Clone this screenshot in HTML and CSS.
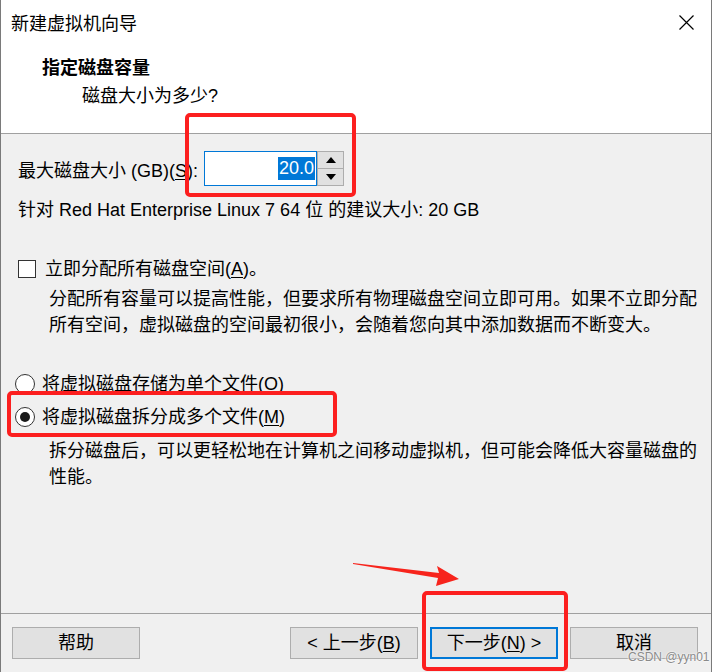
FILE: index.html
```html
<!DOCTYPE html>
<html lang="zh-CN">
<head>
    <meta charset="UTF-8">
    <title>新建虚拟机向导</title>
    <link rel="stylesheet" href="styles.css">
</head>
<body>
    <div class="dialog">
        <div class="titlebar">
            <span class="title">新建虚拟机向导</span>
            <svg class="close" width="15" height="15" viewBox="0 0 15 15">
                <path d="M0.5 0.5 L14.5 14.5 M14.5 0.5 L0.5 14.5" stroke="#000" stroke-width="1.2" fill="none"/>
            </svg>
        </div>
        <div class="header">
            <h1>指定磁盘容量</h1>
            <p>磁盘大小为多少?</p>
        </div>

        <div class="body">
            <div class="size-row">
                <span>最大磁盘大小 (GB)(<u>S</u>):</span>
                <div class="spin">
                    <div class="field"><span class="sel">20.0</span></div>
                    <div class="arrows">
                        <div class="arrow"><svg width="10" height="6" viewBox="0 0 10 6"><path d="M5 0 L10 6 L0 6 Z"/></svg></div>
                        <div class="arrow"><svg width="10" height="6" viewBox="0 0 10 6"><path d="M0 0 L10 0 L5 6 Z"/></svg></div>
                    </div>
                </div>
            </div>
            <p class="hint">针对 Red Hat Enterprise Linux 7 64 位 的建议大小: 20 GB</p>

            <div class="check-row"><span class="box"></span>立即分配所有磁盘空间(<u>A</u>)。</div>
            <p class="desc">分配所有容量可以提高性能，但要求所有物理磁盘空间立即可用。如果不立即分配所有空间，虚拟磁盘的空间最初很小，会随着您向其中添加数据而不断变大。</p>

            <div class="radio-row"><span class="radio"></span>将虚拟磁盘存储为单个文件(<u>O</u>)</div>
            <div class="radio-row"><span class="radio checked"></span>将虚拟磁盘拆分成多个文件(<u>M</u>)</div>
            <p class="desc">拆分磁盘后，可以更轻松地在计算机之间移动虚拟机，但可能会降低大容量磁盘的性能。</p>
        </div>

        <div class="footer">
            <div class="btn">帮助</div>
            <div class="spacer"></div>
            <div class="btn">&lt; 上一步(<u>B</u>)</div>
            <div class="btn default">下一步(<u>N</u>) &gt;</div>
            <div class="btn">取消</div>
        </div>

        <!-- annotations drawn over the screenshot -->
        <div class="mark mark-size"></div>
        <div class="mark mark-split"></div>
        <div class="mark mark-next"></div>
        <svg class="pointer" width="120" height="40" viewBox="0 0 120 40">
            <path d="M0 3 L86 13 L84 6 L106 19 L83 26 L85 18 L0 4 Z" fill="#f7241c"/>
        </svg>
        <span class="watermark">CSDN @yyn01</span>
    </div>
</body>
</html>
```

FILE: styles.css
```css
html, body {
    margin: 0;
    padding: 0;
}
body {
    font-family: "Liberation Sans", "Noto Sans CJK SC", sans-serif;
    font-size: 18px;
    color: #000;
    background: #f0f0f0;
}
.dialog {
    position: relative;
    width: 712px;
    height: 672px;
    box-sizing: border-box;
    border-left: 1px solid #7a7a7a;
    border-right: 1px solid #7a7a7a;
    background: #f0f0f0;
    display: flex;
    flex-direction: column;
    overflow: hidden;
}
u {
    text-underline-offset: 2px;
}

/* title + header */
.titlebar {
    height: 44px;
    background: #fff;
    display: flex;
    align-items: center;
    justify-content: space-between;
    padding: 0 17px 0 10px;
}
.header {
    height: 90px;
    box-sizing: border-box;
    background: #fff;
    border-bottom: 1px solid #a0a0a0;
    padding: 11px 0 0 41px;
}
.header h1 {
    margin: 0;
    font-size: 18px;
    font-weight: bold;
    line-height: 26px;
}
.header p {
    margin: 2px 0 0 40px;
    line-height: 26px;
}

/* body */
.body {
    flex: 1;
    padding: 17px 0 0 17px;
}
.size-row {
    display: flex;
    align-items: center;
    height: 35px;
    gap: 6px;
}
.spin {
    display: flex;
    height: 35px;
}
.field {
    width: 110px;
    border: 1px solid #0078d7;
    background: #fff;
    display: flex;
    align-items: center;
    justify-content: flex-end;
    padding-right: 1px;
}
.sel {
    background: #0078d7;
    color: #fff;
    line-height: 23px;
    padding: 0 1px;
}
.arrows {
    width: 26px;
    display: flex;
    flex-direction: column;
    border: 1px solid #adadad;
    border-left: none;
}
.arrow {
    flex: 1;
    background: #e1e1e1;
    border-left: 1px solid #adadad;
    display: flex;
    align-items: center;
    justify-content: center;
}
.arrow + .arrow {
    border-top: 1px solid #adadad;
}
.hint {
    margin: 11px 0 0;
    line-height: 26px;
}
.check-row, .radio-row {
    display: flex;
    align-items: center;
    line-height: 26px;
}
.check-row {
    margin-top: 33px;
}
.box {
    width: 16px;
    height: 16px;
    border: 1px solid #333;
    background: #fff;
    margin-right: 9px;
}
.desc {
    margin: 4px 14px 0 31px;
    line-height: 26px;
}
.radio-row {
    height: 33px;
    margin-left: -3px;
}
.desc + .radio-row {
    margin-top: 29px;
}
.radio {
    width: 18px;
    height: 18px;
    border: 1px solid #333;
    border-radius: 50%;
    background: #fff;
    margin-right: 7px;
    display: flex;
    align-items: center;
    justify-content: center;
}
.radio.checked::after {
    content: "";
    width: 10px;
    height: 10px;
    border-radius: 50%;
    background: #1a1a1a;
}
.radio-row + .desc {
    margin-top: 5px;
}

/* footer */
.footer {
    height: 59px;
    box-sizing: border-box;
    border-top: 1px solid #a0a0a0;
    display: flex;
    align-items: flex-start;
    gap: 12px;
    padding: 13px 13px 0 11px;
}
.spacer {
    flex: 1;
}
.btn {
    width: 126px;
    height: 30px;
    line-height: 30px;
    text-align: center;
    border: 1px solid #adadad;
    background: #e1e1e1;
}
.btn.default {
    width: 124px;
    height: 28px;
    line-height: 28px;
    border: 2px solid #0078d7;
}

/* annotations */
.mark {
    position: absolute;
    border: 4px solid #fc1f1f;
    border-radius: 5px;
}
.mark-size {
    left: 184px;
    top: 113px;
    width: 163px;
    height: 76px;
}
.mark-split {
    left: 6px;
    top: 391px;
    width: 322px;
    height: 38px;
}
.mark-next {
    left: 421px;
    top: 591px;
    width: 138px;
    height: 72px;
}
.pointer {
    position: absolute;
    left: 352px;
    top: 560px;
}
.watermark {
    position: absolute;
    left: 627px;
    top: 650px;
    font-size: 12px;
    color: #8a8a8a;
    text-shadow: 0 0 2px #fff, 0 0 2px #fff;
}
```
